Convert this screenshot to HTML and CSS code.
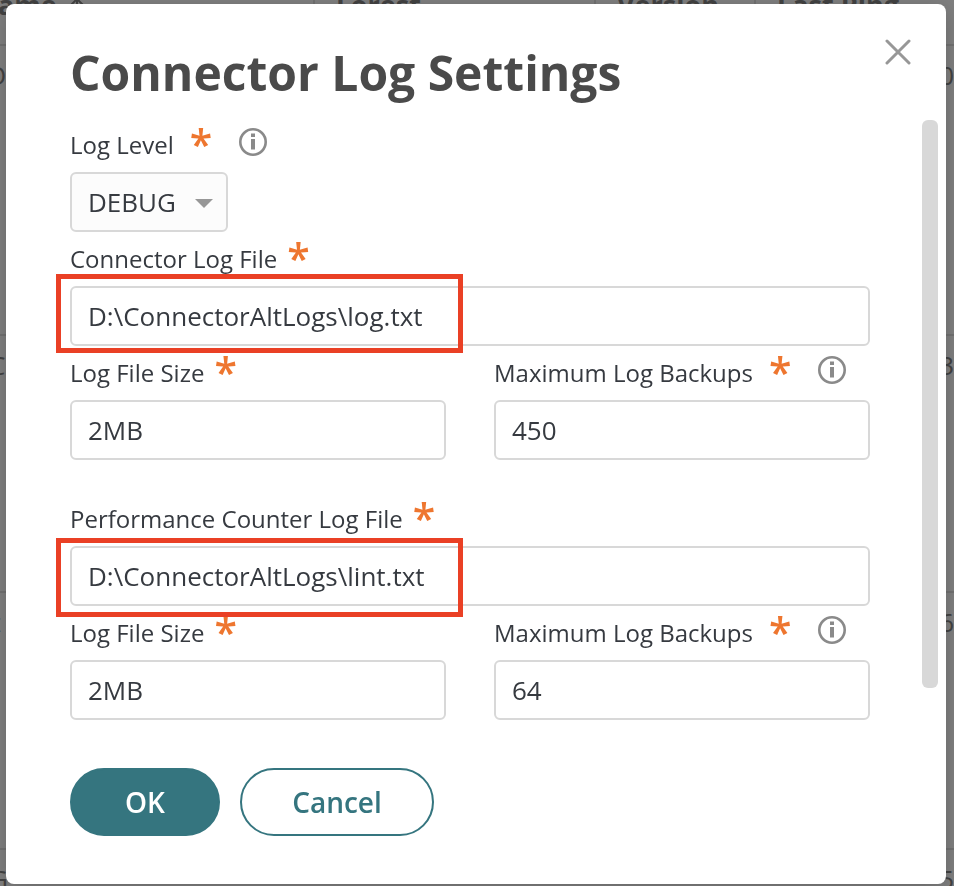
FILE: index.html
```html
<!DOCTYPE html>
<html lang="en">
<head>
    <meta charset="UTF-8">
    <meta name="viewport" content="width=device-width, initial-scale=1.0">
    <title>Connector Log Settings</title>
    <link rel="stylesheet" href="styles.css">
</head>
<body>
    <div class="connectors">
        <div class="row head">
            <div>Name <svg class="sort" width="18" height="22" viewBox="0 0 18 22"><path d="M9 21V3M2 10L9 3L16 10"/></svg></div>
            <div>Forest</div>
            <div>Version</div>
            <div>Last Ping</div>
        </div>
        <div class="row first"><span>O</span><span>0</span></div>
        <div class="row"><span>C</span><span>3</span></div>
        <div class="row"><span>z</span><span>6</span></div>
        <div class="row last"><span>G</span><span>5</span></div>
    </div>

    <div class="overlay">
        <div class="modal">
            <button class="close" aria-label="Close">
                <svg width="26" height="26" viewBox="0 0 26 26"><path d="M2 2L24 24M24 2L2 24"/></svg>
            </button>
            <h1>Connector Log Settings</h1>

            <form class="settings">
                <div class="field">
                    <label>Log Level <span class="required">*</span>
                        <svg class="info" width="30" height="30" viewBox="0 0 30 30"><circle cx="15" cy="15" r="12.7"/><path d="M13 6.500h4v3.500h-4zM13 12h4v10.500h-4z"/></svg>
                    </label>
                    <div class="select">DEBUG <span class="arrow"></span></div>
                </div>
                <div class="field">
                    <label for="connectorLog">Connector Log File <span class="required file">*</span></label>
                    <input type="text" id="connectorLog" value="D:\ConnectorAltLogs\log.txt">
                    <div class="highlight"></div>
                </div>
                <div class="columns">
                    <div class="field">
                        <label for="logSize">Log File Size <span class="required file">*</span></label>
                        <input type="text" id="logSize" value="2MB">
                    </div>
                    <div class="field">
                        <label for="logBackups">Maximum Log Backups <span class="required">*</span>
                            <svg class="info" width="30" height="30" viewBox="0 0 30 30"><circle cx="15" cy="15" r="12.7"/><path d="M13 6.500h4v3.500h-4zM13 12h4v10.500h-4z"/></svg>
                        </label>
                        <input type="text" id="logBackups" value="450">
                    </div>
                </div>

                <div class="field group">
                    <label for="perfLog">Performance Counter Log File <span class="required file">*</span></label>
                    <input type="text" id="perfLog" value="D:\ConnectorAltLogs\lint.txt">
                    <div class="highlight lower"></div>
                </div>
                <div class="columns">
                    <div class="field">
                        <label for="perfSize">Log File Size <span class="required file">*</span></label>
                        <input type="text" id="perfSize" value="2MB">
                    </div>
                    <div class="field">
                        <label for="perfBackups">Maximum Log Backups <span class="required">*</span>
                            <svg class="info" width="30" height="30" viewBox="0 0 30 30"><circle cx="15" cy="15" r="12.7"/><path d="M13 6.500h4v3.500h-4zM13 12h4v10.500h-4z"/></svg>
                        </label>
                        <input type="text" id="perfBackups" value="64">
                    </div>
                </div>

                <div class="actions">
                    <button type="button" class="btn primary">OK</button>
                    <button type="button" class="btn">Cancel</button>
                </div>
            </form>
            <div class="scrollbar"></div>
        </div>
    </div>
</body>
</html>
```

FILE: styles.css
```css
* {
    margin: 0;
    padding: 0;
    box-sizing: border-box;
}

body {
    height: 886px;
    overflow: hidden;
    font-family: 'Open Sans', sans-serif;
    color: #363a40;
    background: #fff;
}

.connectors {
    height: 886px;
    overflow: hidden;
    font-size: 26px;
    line-height: 36px;
    color: #858585;
}

.row {
    display: flex;
    justify-content: space-between;
    height: 257px;
    padding-top: 11px;
    border-bottom: 2px solid #e2e2e2;
}

.row span:first-child {
    margin-left: -11px;
}

.row.head {
    display: grid;
    grid-template-columns: 315px 281px 160px 1fr;
    height: 46px;
    padding: 0;
    font-size: 27px;
    font-weight: 700;
}

.head div {
    margin-top: -13px;
    padding-left: 21px;
    border-right: 2px solid #e2e2e2;
}

.head div:first-child {
    margin-left: -45px;
}

.head div:last-child {
    border: none;
}

.sort {
    margin-left: 4px;
    vertical-align: -3px;
    fill: none;
    stroke: #858585;
    stroke-width: 2;
}

.row.first {
    height: 290px;
}

.row.first span:first-child {
    margin-left: -14px;
}

.overlay {
    position: fixed;
    inset: 0;
    padding: 4px 8px 2px 6px;
    background: rgba(0, 0, 0, 0.5);
}

.modal {
    position: relative;
    height: 880px;
    padding: 37px 76px 0 64px;
    border-radius: 8px;
    background: #fff;
    box-shadow: 0 4px 20px rgba(0, 0, 0, 0.2);
}

h1 {
    height: 77px;
    font-size: 48px;
    line-height: 64px;
    color: #4a4a4a;
    white-space: nowrap;
}

.close {
    position: absolute;
    top: 35px;
    right: 35px;
    width: 26px;
    height: 26px;
    border: none;
    background: none;
}

.close svg {
    display: block;
    fill: none;
    stroke: #979797;
    stroke-width: 3;
    stroke-linecap: round;
}

.field {
    position: relative;
    height: 114px;
}

.field.group {
    margin-top: 32px;
}

label {
    display: flex;
    align-items: center;
    height: 54px;
    padding-bottom: 2px;
    font-size: 24px;
    white-space: nowrap;
}

.required {
    align-self: flex-start;
    margin-left: 16px;
    font-size: 41px;
    line-height: 50px;
    font-weight: 600;
    color: #ee762f;
}

.required.file {
    margin-left: 10px;
}

.info {
    margin: -4px 0 0 26px;
    fill: #8a8a8a;
}

.info circle {
    fill: none;
    stroke: #8a8a8a;
    stroke-width: 2.6;
}

input, .select {
    display: block;
    width: 100%;
    height: 60px;
    padding: 0 16px;
    border: 2px solid #d8d8d8;
    border-radius: 6px;
    background: #fff;
    font-family: inherit;
    font-size: 26px;
    color: #363a40;
}

.select {
    display: flex;
    align-items: center;
    width: 158px;
    background: #fcfcfc;
}

.arrow {
    margin: 3px 0 0 19px;
    border: 9px solid transparent;
    border-top-color: #979797;
    border-bottom: none;
}

.columns {
    display: grid;
    grid-template-columns: 1fr 1fr;
    gap: 48px;
}

.highlight {
    position: absolute;
    top: 42px;
    left: -14px;
    z-index: 1;
    width: 407px;
    height: 79px;
    border: 5px solid #ea4025;
}

.highlight.lower {
    top: 46px;
}

.actions {
    display: flex;
    gap: 20px;
    margin-top: 48px;
}

.btn {
    width: 194px;
    height: 68px;
    border: 2px solid #35757f;
    border-radius: 34px;
    background: #fff;
    font-family: inherit;
    font-size: 28px;
    font-weight: 600;
    color: #35757f;
}

.btn.primary {
    width: 150px;
    background: #35757f;
    color: #fff;
}

.scrollbar {
    position: absolute;
    top: 116px;
    right: 8px;
    width: 16px;
    height: 568px;
    border-radius: 6px;
    background: #d8d8d8;
}
```
